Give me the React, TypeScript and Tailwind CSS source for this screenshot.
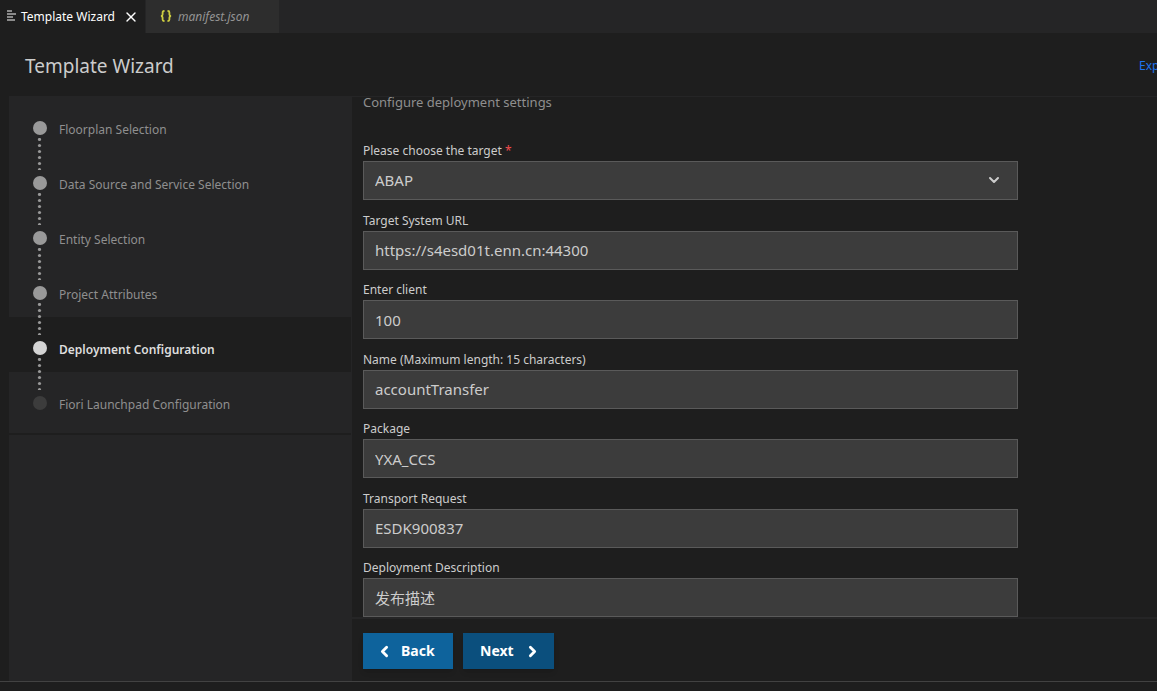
import { ChevronDown, ChevronLeft, ChevronRight, X } from "lucide-react";

type StepState = "done" | "current" | "pending";

interface Step {
  label: string;
  state: StepState;
}

interface Field {
  id: string;
  label: string;
  value: string;
}

const steps: Step[] = [
  { label: "Floorplan Selection", state: "done" },
  { label: "Data Source and Service Selection", state: "done" },
  { label: "Entity Selection", state: "done" },
  { label: "Project Attributes", state: "done" },
  { label: "Deployment Configuration", state: "current" },
  { label: "Fiori Launchpad Configuration", state: "pending" },
];

const fields: Field[] = [
  { id: "url", label: "Target System URL", value: "https://s4esd01t.enn.cn:44300" },
  { id: "client", label: "Enter client", value: "100" },
  { id: "name", label: "Name (Maximum length: 15 characters)", value: "accountTransfer" },
  { id: "package", label: "Package", value: "YXA_CCS" },
  { id: "transport", label: "Transport Request", value: "ESDK900837" },
  { id: "description", label: "Deployment Description", value: "发布描述" },
];

const dotColors: Record<StepState, string> = {
  done: "bg-[#999999]",
  current: "bg-[#d4d4d4]",
  pending: "bg-[#3c3c3c]",
};

const labelClass = "block pb-[2px] text-xs leading-[17px]";
const controlClass =
  "block h-[39px] w-full appearance-none rounded-none border border-[#5a5a5a] bg-[#3c3c3c] px-[11px] text-[15px] text-[#cccccc] outline-none";

function TabBar() {
  return (
    <div role="tablist" className="flex h-[33px] bg-[#252526] text-xs">
      <div className="flex w-[145px] items-center bg-[#1e1e1e] pl-[6px] text-white">
        <svg width="10" height="11" viewBox="0 0 10 11" stroke="#b0b0b0" fill="none" className="mr-[5px] mb-[3px] shrink-0">
          <path d="M1 1h5M1 4h9M1 7h6M1 10h8" strokeWidth="1.5" />
        </svg>
        <button role="tab" aria-selected="true" className="whitespace-nowrap">
          Template Wizard
        </button>
        <button aria-label="Close tab" className="ml-2">
          <X size={16} strokeWidth={2} />
        </button>
      </div>
      <div className="ml-px flex w-[133px] items-center bg-[#2d2d2d] pl-[14px]">
        <svg
          width="12"
          height="12"
          viewBox="0 0 12 12"
          fill="none"
          stroke="#cbcb41"
          strokeWidth="1.8"
          className="mr-[6px] mb-[2px] shrink-0"
        >
          <path d="M4.5 1H4Q2.6 1 2.6 2.4V4.5Q2.6 5.8 1 6Q2.6 6.2 2.6 7.5V9.6Q2.6 11 4 11H4.5M7.5 1H8Q9.4 1 9.4 2.4V4.5Q9.4 5.8 11 6Q9.4 6.2 9.4 7.5V9.6Q9.4 11 8 11H7.5" />
        </svg>
        <button role="tab" aria-selected="false" className="italic text-[#939393]">
          manifest.json
        </button>
      </div>
    </div>
  );
}

function StepItem({ step, last }: { step: Step; last: boolean }) {
  const current = step.state === "current";
  return (
    <li className={`flex h-[55px] pl-6 ${current ? "bg-[#1e1e1e]" : ""}`}>
      <div className="flex w-[14px] flex-col items-center pt-6">
        <span className={`h-[14px] w-[14px] shrink-0 rounded-full ${dotColors[step.state]}`} />
        {!last && (
          <svg width="13" height="32" viewBox="0 0 13 32" className="-mb-4 mt-[3px] shrink-0 self-start" fill="#999999">
            {[0, 6, 12, 18, 24, 30].map((y) => (
              <circle key={y} cx="6.5" cy={y + 1.5} r="1.6" />
            ))}
          </svg>
        )}
      </div>
      <span className={`ml-3 pt-6 text-xs leading-[18px] ${current ? "font-semibold text-[#dddddd]" : "text-[#8f8f8f]"}`}>
        {step.label}
      </span>
    </li>
  );
}

export default function App() {
  return (
    <div className="flex min-h-screen flex-col overflow-hidden bg-[#1e1e1e] font-['Noto_Sans','Noto_Sans_CJK_SC',sans-serif] text-[#cccccc]">
      <TabBar />

      <header className="flex h-[63px] items-center justify-between pl-[25px] pt-[3px]">
        <h1 className="text-[19px]">Template Wizard</h1>
        <a href="#explore" className="w-[18px] overflow-hidden text-xs text-[#1f75ee]">
          Exp
        </a>
      </header>

      <div className="flex flex-1 pl-[9px]">
        <nav className="w-[342px] shrink-0 bg-[#252526] pt-px">
          <ol className="border-b-2 border-[#1e1e1e] pb-[6px]">
            {steps.map((step, i) => (
              <StepItem key={step.label} step={step} last={i === steps.length - 1} />
            ))}
          </ol>
        </nav>

        <main className="flex min-w-0 flex-1 flex-col border-l border-t border-[#252526]">
          <form className="flex flex-1 flex-col">
            <div className="flex w-full max-w-[666px] flex-1 flex-col pl-[11px]">
              <p className="h-[45px] text-[13px] leading-[10px] text-[#8f8f8f]">Configure deployment settings</p>
              <div className="flex flex-1 flex-col justify-between">
                <div>
                  <label htmlFor="target" className={labelClass}>
                    Please choose the target <span className="text-[#f14c4c]">*</span>
                  </label>
                  <div className="relative">
                    <select id="target" defaultValue="ABAP" className={controlClass}>
                      <option>ABAP</option>
                    </select>
                    <ChevronDown size={16} strokeWidth={3} className="pointer-events-none absolute right-4 top-[11px]" />
                  </div>
                </div>
                {fields.map((field) => (
                  <div key={field.id}>
                    <label htmlFor={field.id} className={labelClass}>
                      {field.label}
                    </label>
                    <input id={field.id} type="text" defaultValue={field.value} className={controlClass} />
                  </div>
                ))}
              </div>
            </div>
            <div className="flex gap-[10px] border-t-2 border-[#252526] pb-3 pl-[11px] pt-[14px] text-sm font-bold text-white">
              <button type="button" className="flex h-9 w-[90px] items-center gap-2 bg-[#0e639c] pl-[13px] shadow-md">
                <ChevronLeft size={17} strokeWidth={4} />
                Back
              </button>
              <button type="button" className="flex h-9 w-[91px] items-center justify-between bg-[#0b4f7d] pl-[17px] pr-[13px] shadow-md">
                Next
                <ChevronRight size={17} strokeWidth={4} />
              </button>
            </div>
          </form>
        </main>
      </div>

      <footer className="h-[10px] border-t border-[#424242]" />
    </div>
  );
}
